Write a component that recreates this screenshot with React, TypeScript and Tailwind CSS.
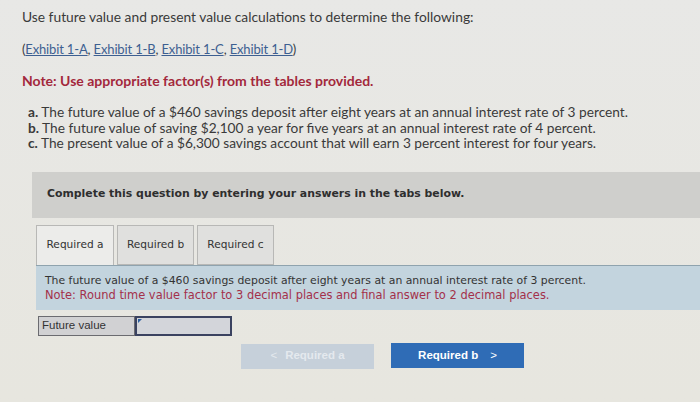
import React from "react";

export default function App() {
  const sans = { fontFamily: "Lato, 'Open Sans', sans-serif" } as React.CSSProperties;
  const verdana = { fontFamily: "'DejaVu Sans', Verdana, sans-serif" } as React.CSSProperties;
  return (
    <div className="w-[700px] h-[402px] overflow-hidden bg-gradient-to-b from-[#e8e8e6] to-[#e7e6df] text-[#333]" style={sans}>
      <div className="pl-[22px] pt-[8px]">
        <p className="text-[13.8px] leading-[18px] text-[#3a3a3a]">
          Use future value and present value calculations to determine the following:
        </p>
        <p className="mt-[14px] text-[13px] leading-[18px] tracking-[-0.15px] text-[#3a3a3a]">
          (<span className="underline text-[#3d5f91]">Exhibit 1-A</span>,{" "}
          <span className="underline text-[#3d5f91]">Exhibit 1-B</span>,{" "}
          <span className="underline text-[#3d5f91]">Exhibit 1-C</span>,{" "}
          <span className="underline text-[#3d5f91]">Exhibit 1-D</span>)
        </p>
        <p className="mt-[14px] text-[14px] leading-[18px] font-bold text-[#a3283c]">
          Note: Use appropriate factor(s) from the tables provided.
        </p>
        <div className="mt-[14px] pl-[6px] text-[13.7px] leading-[15.5px] text-[#3a3a3a]">
          <p><span className="font-bold">a.</span> The future value of a $460 savings deposit after eight years at an annual interest rate of 3 percent.</p>
          <p><span className="font-bold">b.</span> The future value of saving $2,100 a year for five years at an annual interest rate of 4 percent.</p>
          <p><span className="font-bold">c.</span> The present value of a $6,300 savings account that will earn 3 percent interest for four years.</p>
        </div>
      </div>

      <div className="ml-[32px] mt-[21px] h-[46px] bg-[#cfcfcc] flex items-center pl-[15px]">
        <span className="text-[10.9px] font-bold text-[#2e2e2e]" style={verdana}>
          Complete this question by entering your answers in the tabs below.
        </span>
      </div>

      <div className="ml-[36px] mt-[7px]" style={verdana}>
        <div className="flex gap-[2px] items-end h-[40px]">
          <div className="w-[78px] h-[40px] bg-[#ececea] border border-b-0 border-[#b8b8b6] flex items-center justify-center text-[10.6px] text-[#333]">Required a</div>
          <div className="w-[77px] h-[40px] bg-[#e0e0de] border border-[#b8b8b6] flex items-center justify-center text-[10.6px] text-[#333] ml-[1px]">Required b</div>
          <div className="w-[77px] h-[40px] bg-[#e0e0de] border border-[#b8b8b6] flex items-center justify-center text-[10.6px] text-[#333] ml-[1px]">Required c</div>
        </div>
        <div className="h-[45px] bg-[#c3d4de] border-t border-[#8fa3ae] pl-[9px] pt-[8px] leading-[14px]">
          <p className="text-[10.85px] text-[#333]">The future value of a $460 savings deposit after eight years at an annual interest rate of 3 percent.</p>
          <p className="text-[11.45px] text-[#a3304a]">Note: Round time value factor to 3 decimal places and final answer to 2 decimal places.</p>
        </div>
        <div className="mt-[6px] ml-[2px] flex h-[20px]" style={{ fontFamily: "'Liberation Sans', Arial, sans-serif" }}>
          <div className="w-[97px] h-[20px] bg-[#d1d1d3] border border-[#6b6b70] flex items-center pl-[3px] text-[11.5px] text-[#333]">Future value</div>
          <div className="relative w-[97px] h-[20px] bg-[#d3d5da] border-2 border-[#3a4260]">
            <div className="absolute left-[1px] top-[1px] w-0 h-0 border-t-[4px] border-r-[4px] border-t-[#2d5fa0] border-r-transparent" />
          </div>
        </div>
        <div className="mt-[8px] ml-[205px] flex items-center gap-[17px]" style={{ fontFamily: "'Liberation Sans', Arial, sans-serif" }}>
          <div className="w-[133px] h-[25px] bg-[#c6d0da] flex items-center justify-center gap-[8px] text-[11.5px] font-bold text-[#e4e9ee]">
            <span className="font-normal">&lt;</span>
            <span>Required a</span>
          </div>
          <div className="w-[133px] h-[25px] bg-[#2f6cb6] flex items-center justify-center gap-[12px] text-[11.5px] font-bold text-white -mt-[1px]">
            <span>Required b</span>
            <span className="font-normal">&gt;</span>
          </div>
        </div>
      </div>
    </div>
  );
}
